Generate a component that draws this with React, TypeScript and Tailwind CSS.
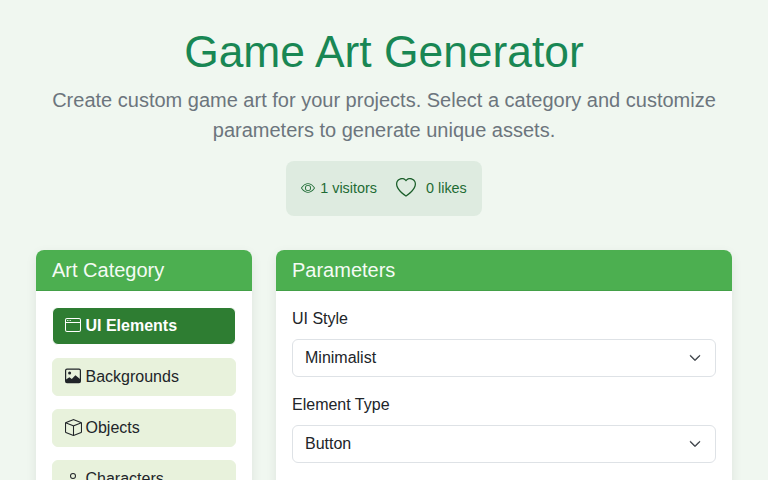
import { BsEye, BsHeart, BsWindow, BsBox, BsPerson, BsChevronDown } from "react-icons/bs";
import type { ReactNode } from "react";

function ImageIcon() {
  return (
    <svg width="16" height="16" viewBox="0 0 16 16" fill="currentColor" className="-translate-y-px">
      <rect x="0.6" y="1.1" width="14.8" height="13.6" rx="1.4" fill="none" stroke="currentColor" strokeWidth="1.2" />
      <circle cx="4.6" cy="5" r="1.5" />
      <path d="M1 14.6V11.6l3.4-2.4 2.4 1.7 3.6-3.7L15 11v3.6z" />
    </svg>
  );
}

const items: { label: string; icon: ReactNode; active?: boolean }[] = [
  { label: "UI Elements", icon: <BsWindow size={16} className="-translate-y-px" />, active: true },
  { label: "Backgrounds", icon: <ImageIcon /> },
  { label: "Objects", icon: <BsBox size={17} className="-mr-px -translate-y-px" /> },
  { label: "Characters", icon: <BsPerson size={16} /> },
];

function Field({ label, value }: { label: string; value: string }) {
  return (
    <div className="mb-4">
      <div className="mb-2 text-base leading-6 text-[#212529]">{label}</div>
      <div className="flex h-[38px] items-center justify-between rounded-md border border-[#dee2e6] bg-white pl-3 pr-[14px] text-base text-[#212529]">
        <span>{value}</span>
        <BsChevronDown size={12} strokeWidth={1} className="text-[#343a40]" />
      </div>
    </div>
  );
}

export default function App() {
  return (
    <div className="h-[480px] overflow-hidden bg-[#f0f7f0] font-['Liberation_Sans',Arial,sans-serif]">
      <div className="mx-auto w-[720px] px-3 pt-[25px]">
        <header className="mb-[34px] text-center">
          <h1 className="mb-[6px] text-[44.4px] leading-[54px] font-normal text-[#198754]">Game Art Generator</h1>
          <p className="mb-4 text-xl leading-[30px] text-[#6c757d]">
            Create custom game art for your projects. Select a category and customize parameters to generate unique assets.
          </p>
          <div className="inline-flex h-[55px] items-center gap-[19px] rounded-lg bg-[#deebe0] px-[15px] text-[14.4px] text-[#1e6b34]">
            <span className="flex items-center gap-[5px]">
              <BsEye size={14} />
              1 visitors
            </span>
            <span className="flex items-center gap-[10px]">
              <BsHeart size={20} className="text-[#1b5e2a]" />
              0 likes
            </span>
          </div>
        </header>
        <div className="grid grid-cols-[216px_456px] gap-6">
          <section className="rounded-lg bg-white shadow-[0_4px_12px_rgba(0,0,0,0.08)]">
            <div className="flex h-[41px] items-center rounded-t-lg border-b border-[#43a047] bg-[#4caf50] px-4 text-xl text-[#f4fbf4]">
              Art Category
            </div>
            <div className="flex flex-col gap-[13px] p-4">
              {items.map((it) => (
                <div
                  key={it.label}
                  className={
                    it.active
                      ? "flex h-[38px] items-center gap-[4.5px] rounded-md border border-white bg-[#2e7d32] px-3 font-bold text-white"
                      : "flex h-[38px] items-center gap-[4.5px] rounded-md border border-[#e8f2dc] bg-[#e8f2dc] px-3 text-[#212529]"
                  }
                >
                  {it.icon}
                  <span>{it.label}</span>
                </div>
              ))}
            </div>
          </section>
          <section className="rounded-lg bg-white shadow-[0_4px_12px_rgba(0,0,0,0.08)]">
            <div className="flex h-[41px] items-center rounded-t-lg border-b border-[#43a047] bg-[#4caf50] px-4 text-xl text-[#f4fbf4]">
              Parameters
            </div>
            <div className="p-4">
              <Field label="UI Style" value="Minimalist" />
              <Field label="Element Type" value="Button" />
            </div>
          </section>
        </div>
      </div>
    </div>
  );
}
